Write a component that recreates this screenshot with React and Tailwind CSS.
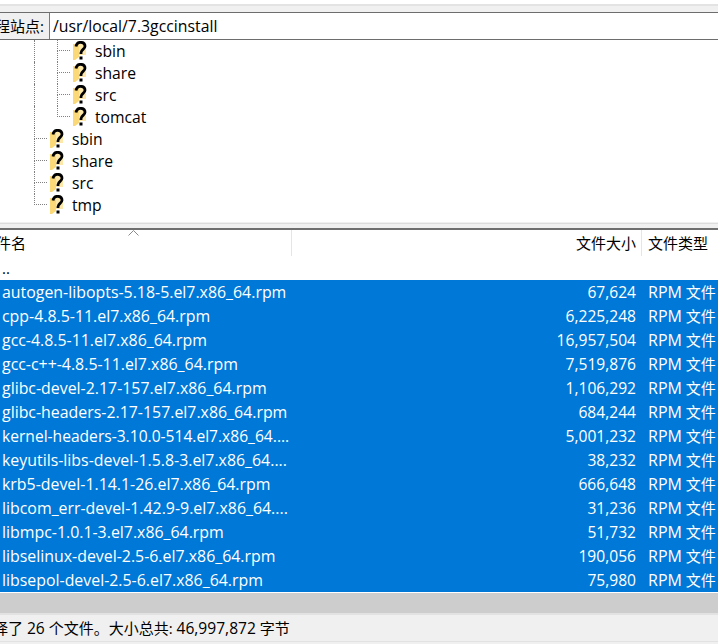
import React from 'react';

const files = [
  ['autogen-libopts-5.18-5.el7.x86_64.rpm', '67,624'],
  ['cpp-4.8.5-11.el7.x86_64.rpm', '6,225,248'],
  ['gcc-4.8.5-11.el7.x86_64.rpm', '16,957,504'],
  ['gcc-c++-4.8.5-11.el7.x86_64.rpm', '7,519,876'],
  ['glibc-devel-2.17-157.el7.x86_64.rpm', '1,106,292'],
  ['glibc-headers-2.17-157.el7.x86_64.rpm', '684,244'],
  ['kernel-headers-3.10.0-514.el7.x86_64....', '5,001,232', true],
  ['keyutils-libs-devel-1.5.8-3.el7.x86_64....', '38,232'],
  ['krb5-devel-1.14.1-26.el7.x86_64.rpm', '666,648'],
  ['libcom_err-devel-1.42.9-9.el7.x86_64....', '31,236'],
  ['libmpc-1.0.1-3.el7.x86_64.rpm', '51,732'],
  ['libselinux-devel-2.5-6.el7.x86_64.rpm', '190,056'],
  ['libsepol-devel-2.5-6.el7.x86_64.rpm', '75,980'],
];

const treeRows = [
  { name: 'sbin', deep: true },
  { name: 'share', deep: true },
  { name: 'src', deep: true },
  { name: 'tomcat', deep: true, last: true },
  { name: 'sbin' },
  { name: 'share' },
  { name: 'src' },
  { name: 'tmp', last: true },
];

const FolderUnknown = () => (
  <svg width="14" height="20" viewBox="0 0 14 20" className="shrink-0">
    <path d="M0 3h6v13l-4 3H0z" fill="#fbd978" />
    <path d="M6 3h7v11H6z" fill="#fde8aa" />
    <path d="M3 5.500C3.500 2.500 5.500 1.300 7.500 1.300c2.800 0 4.500 1.700 4.500 4 0 3-4 3.200-4 6.500v1.200" fill="none" stroke="#000" strokeWidth="2.800" />
    <rect x="6.500" y="15.500" width="3" height="3" fill="#000" />
  </svg>
);

const Connector = ({ last }) => (
  <div className="w-[16px] h-full shrink-0 flex flex-col">
    <div className="w-[13px] h-[11px] border-l border-b border-dotted border-[#808080]" />
    {!last && <div className="h-[11px] border-l border-dotted border-[#808080]" />}
  </div>
);

const TreeRow = ({ name, deep, last }) => (
  <div className="h-[22px] flex items-center">
    {deep && <div className="w-[23px] h-full shrink-0 border-l border-dotted border-[#808080]" />}
    <Connector last={last} />
    <FolderUnknown />
    <span className="ml-[8px] pt-[2px] text-[15.7px]">{name}</span>
  </div>
);

const App = () => {
  return (
    <div
      className="w-[718px] h-[644px] overflow-hidden bg-white text-[15px] text-black flex flex-col"
      style={{ fontFamily: '"Open Sans", "Noto Sans CJK SC", sans-serif' }}
    >
      {/* top toolbar edge */}
      <div className="h-[12px] bg-[#f0f0f0] shrink-0 flex flex-col">
        <div className="h-[4px] bg-white" />
        <div className="h-[2px] bg-[#e3e3e3]" />
      </div>

      {/* remote site bar */}
      <div className="h-[28px] shrink-0 flex border-y border-[#6d6d6d] bg-[#f0f0f0] leading-[26px]">
        <div className="w-[49px] shrink-0 overflow-hidden whitespace-nowrap flex justify-end pr-[5px]">程站点:</div>
        <div className="flex-1 bg-white border-l border-[#7a7a7a] pl-[3px] text-[15.8px]">/usr/local/7.3gccinstall</div>
      </div>

      {/* directory tree */}
      <div className="h-[182px] shrink-0 pl-[34px]">
        {treeRows.map((row, i) => (
          <TreeRow key={i} {...row} />
        ))}
      </div>

      {/* splitter */}
      <div className="h-[8px] shrink-0 bg-[#f0f0f0] flex flex-col">
        <div className="h-[1px] mt-[1px] bg-[#dcdcdc]" />
        <div className="h-[2px] mt-auto bg-[#6f6f6f]" />
      </div>

      {/* list header */}
      <div className="h-[26px] shrink-0 flex leading-[26px] relative">
        <div className="w-[292px] shrink-0 border-r border-[#e5e5e5] overflow-hidden whitespace-nowrap flex justify-end pr-[265px]">文件名</div>
        <div className="w-[350px] shrink-0 border-r border-[#e5e5e5] text-right pr-[5px]">文件大小</div>
        <div className="pl-[6px] whitespace-nowrap">文件类型</div>
        <svg width="11" height="6" viewBox="0 0 11 6" className="absolute left-[128px] top-0">
          <path d="M0.500 5.500L5.500 0.500L10.500 5.500" fill="none" stroke="#8a8a8a" />
        </svg>
      </div>

      {/* file list */}
      <div className="h-[24px] shrink-0 leading-[24px] pl-[2px]">..</div>
      <div className="shrink-0 bg-[#0078d7] text-white">
        {files.map(([name, size, tight]) => (
          <div key={name} className="h-[24px] flex leading-[24px] whitespace-nowrap">
            <div className={tight ? 'w-[292px] shrink-0 pl-[2px] overflow-hidden text-[15.6px]' : 'w-[292px] shrink-0 pl-[2px] overflow-hidden text-[15.9px]'}>{name}</div>
            <div className="w-[344px] shrink-0 text-right text-[15.6px]">{size}</div>
            <div className="pl-[12px]"><span className="text-[16px]">RPM</span> 文件</div>
          </div>
        ))}
      </div>

      {/* horizontal scrollbar */}
      <div className="h-[20px] mt-[1px] shrink-0 bg-[#cdcdcd]" />

      {/* status bar */}
      <div className="h-[29px] shrink-0 border-t-2 border-b border-[#e2e2e2] bg-[#f0f0f0] leading-[26px] overflow-hidden whitespace-nowrap">
        <span className="block ml-[-7px]">
          择了 <span className="text-[15.6px]">26</span> 个文件。大小总共: <span className="text-[15.6px]">46,997,872</span> 字节
        </span>
      </div>
      <div className="flex-1 bg-[#f0f0f0]" />
    </div>
  );
};

export default App;
